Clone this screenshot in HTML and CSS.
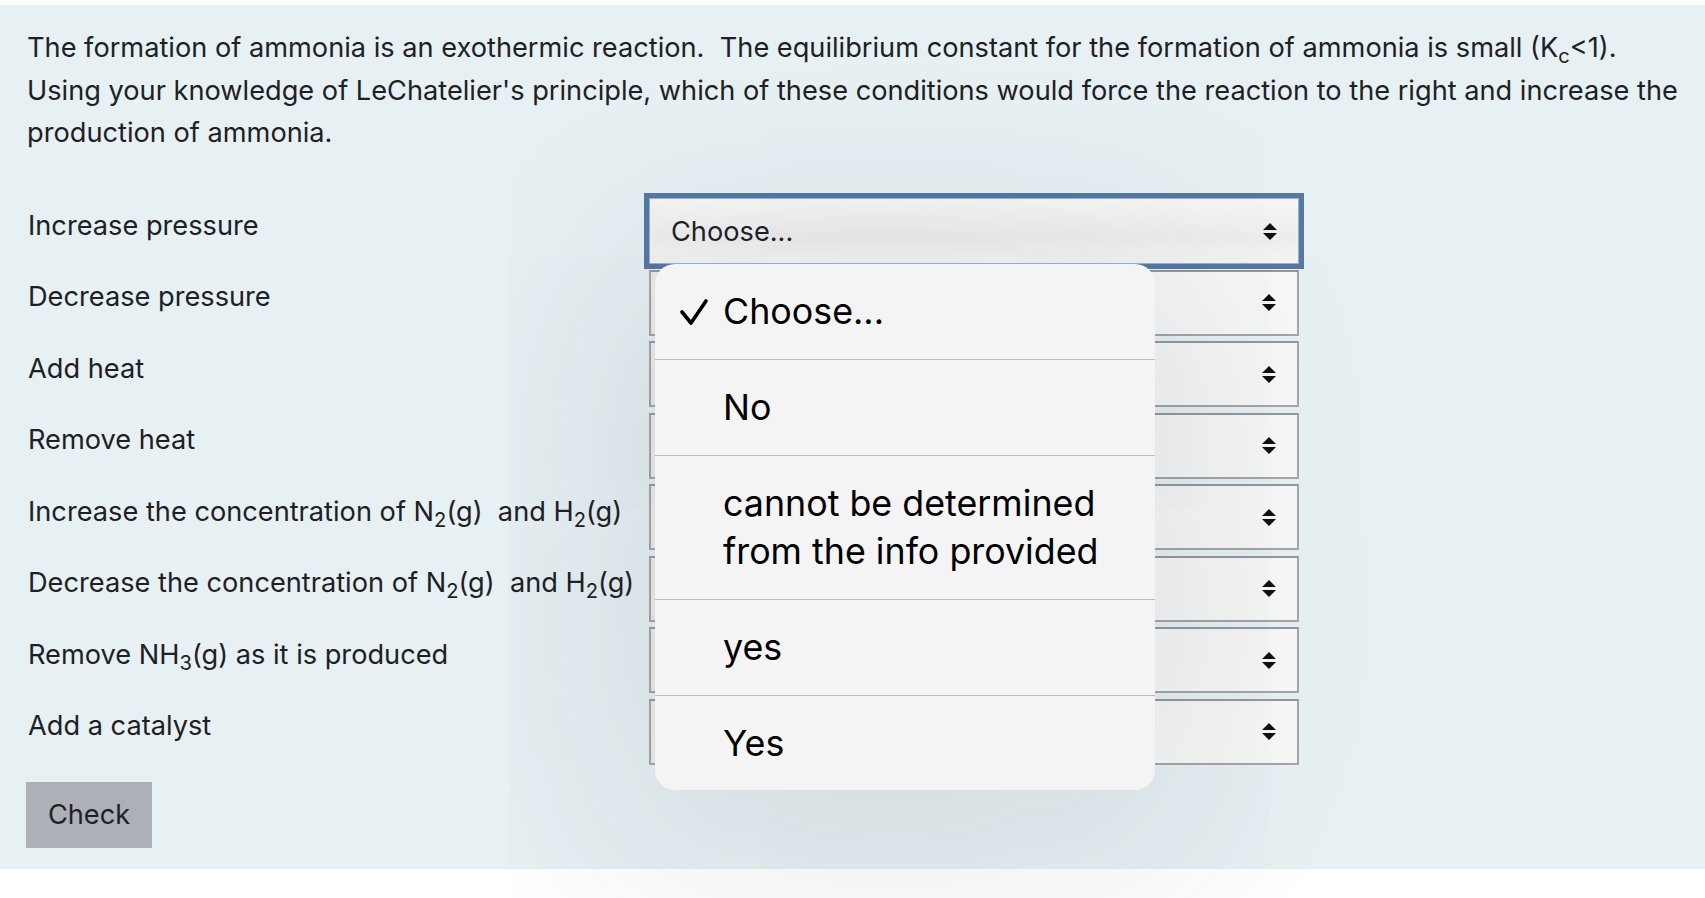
FILE: index.html
```html
<!DOCTYPE html>
<html lang="en">
<head>
<meta charset="utf-8">
<title>Ammonia equilibrium</title>
<link rel="stylesheet" href="styles.css">
</head>
<body>
<div class="panel">
  <div class="question">
    <div class="qline">The formation of ammonia is an exothermic reaction.&nbsp; The equilibrium constant for the formation of ammonia is small (K<sub class="sub">c</sub>&lt;1).</div>
    <div class="qline">Using your knowledge of LeChatelier's principle, which of these conditions would force the reaction to the right and increase the</div>
    <div class="qline">production of ammonia.</div>
  </div>

  <div class="answers">
    <div class="row">
      <div class="label">Increase pressure</div>
      <div class="select focused"><span class="value">Choose...</span>
        <svg class="arrows" width="14" height="17" viewBox="0 0 14 17"><path d="M7 0 L14 7 L0 7 Z M0 10 L14 10 L7 17 Z" fill="#111"/></svg></div>
    </div>
    <div class="row">
      <div class="label">Decrease pressure</div>
      <div class="select"><span class="value">Choose...</span>
        <svg class="arrows" width="14" height="17" viewBox="0 0 14 17"><path d="M7 0 L14 7 L0 7 Z M0 10 L14 10 L7 17 Z" fill="#111"/></svg></div>
    </div>
    <div class="row">
      <div class="label">Add heat</div>
      <div class="select"><span class="value">Choose...</span>
        <svg class="arrows" width="14" height="17" viewBox="0 0 14 17"><path d="M7 0 L14 7 L0 7 Z M0 10 L14 10 L7 17 Z" fill="#111"/></svg></div>
    </div>
    <div class="row">
      <div class="label">Remove heat</div>
      <div class="select"><span class="value">Choose...</span>
        <svg class="arrows" width="14" height="17" viewBox="0 0 14 17"><path d="M7 0 L14 7 L0 7 Z M0 10 L14 10 L7 17 Z" fill="#111"/></svg></div>
    </div>
    <div class="row">
      <div class="label">Increase the concentration of N<sub class="sub">2</sub>(g)&nbsp; and H<sub class="sub">2</sub>(g)</div>
      <div class="select"><span class="value">Choose...</span>
        <svg class="arrows" width="14" height="17" viewBox="0 0 14 17"><path d="M7 0 L14 7 L0 7 Z M0 10 L14 10 L7 17 Z" fill="#111"/></svg></div>
    </div>
    <div class="row">
      <div class="label">Decrease the concentration of N<sub class="sub">2</sub>(g)&nbsp; and H<sub class="sub">2</sub>(g)</div>
      <div class="select"><span class="value">Choose...</span>
        <svg class="arrows" width="14" height="17" viewBox="0 0 14 17"><path d="M7 0 L14 7 L0 7 Z M0 10 L14 10 L7 17 Z" fill="#111"/></svg></div>
    </div>
    <div class="row">
      <div class="label">Remove NH<sub class="sub">3</sub>(g) as it is produced</div>
      <div class="select"><span class="value">Choose...</span>
        <svg class="arrows" width="14" height="17" viewBox="0 0 14 17"><path d="M7 0 L14 7 L0 7 Z M0 10 L14 10 L7 17 Z" fill="#111"/></svg></div>
    </div>
    <div class="row">
      <div class="label">Add a catalyst</div>
      <div class="select"><span class="value">Choose...</span>
        <svg class="arrows" width="14" height="17" viewBox="0 0 14 17"><path d="M7 0 L14 7 L0 7 Z M0 10 L14 10 L7 17 Z" fill="#111"/></svg></div>
    </div>
  </div>

  <button class="check">Check</button>
</div>

<div class="menu">
  <div class="item selected">
    <svg class="tick" width="30" height="28" viewBox="0 0 30 28"><polyline points="3,14 12,25 27,3" fill="none" stroke="#000" stroke-width="3.6" stroke-linecap="round" stroke-linejoin="round"/></svg>
    Choose...
  </div>
  <div class="item">No</div>
  <div class="item">cannot be determined<br>from the info provided</div>
  <div class="item">yes</div>
  <div class="item">Yes</div>
</div>
</body>
</html>
```

FILE: styles.css
```css
html, body {
  margin: 0;
  padding: 0;
  background: #ffffff;
}

body {
  font-family: Inter, "Noto Sans", "Liberation Sans", sans-serif;
  color: #1d2125;
  height: 898px;
  overflow: hidden;
}

.panel {
  margin-top: 5px;
  background: #e7f0f3;
  padding: 22px 27px 21px 27px;
}

.question {
  font-size: 27.2px;
  line-height: 42.5px;
}

.qline {
  white-space: nowrap;
}

.sub {
  font-size: 0.74em;
  line-height: 0;
  vertical-align: -0.28em;
}

.answers {
  margin-top: 43.5px;
  display: flex;
  flex-direction: column;
  gap: 5.57px;
}

.row {
  display: flex;
  align-items: flex-start;
}

.label {
  width: 595px;
  padding-left: 1px;
  padding-top: 9.5px;
  font-size: 27.2px;
  line-height: 35px;
  white-space: nowrap;
  flex-shrink: 0;
  margin-right: 26px;
}

.select {
  position: relative;
  box-sizing: border-box;
  width: 650px;
  height: 66px;
  border: 2px solid #a3a6a9;
  border-top-color: #94989c;
  background: linear-gradient(to right, #ececec, #f7f7f7 70%);
  display: flex;
  align-items: center;
  padding: 0 21px 0 21px;
  font-size: 27.2px;
}

.select .value {
  flex: 1;
}

.select.focused {
  border: 1.5px solid #8db3e6;
  background: linear-gradient(#f6f6f6, #ededed 60%, #f5f5f5);
  box-shadow: 0 0 0 5px #57789f;
}

.arrows {
  flex-shrink: 0;
}

.check {
  margin-top: 17px;
  display: block;
  width: 126px;
  height: 66px;
  border: 0;
  background: #adb0b6;
  color: #1d2125;
  font-family: inherit;
  font-size: 27.2px;
  padding: 0;
  margin-left: -1px;
}

.menu {
  position: absolute;
  left: 655px;
  top: 264px;
  width: 500px;
  height: 526px;
  background: #f4f4f4;
  border-radius: 20px;
  box-shadow: 0 30px 220px 30px rgba(30, 50, 60, 0.13);
  overflow: hidden;
  color: #000;
  font-size: 35.8px;
  line-height: 48px;
}

.item {
  position: relative;
  padding: 23px 20px 24px 68px;
  border-bottom: 1px solid #bdbdbd;
}

.item:last-child {
  border-bottom: 0;
}

.tick {
  position: absolute;
  left: 24px;
  top: 34px;
}
```
